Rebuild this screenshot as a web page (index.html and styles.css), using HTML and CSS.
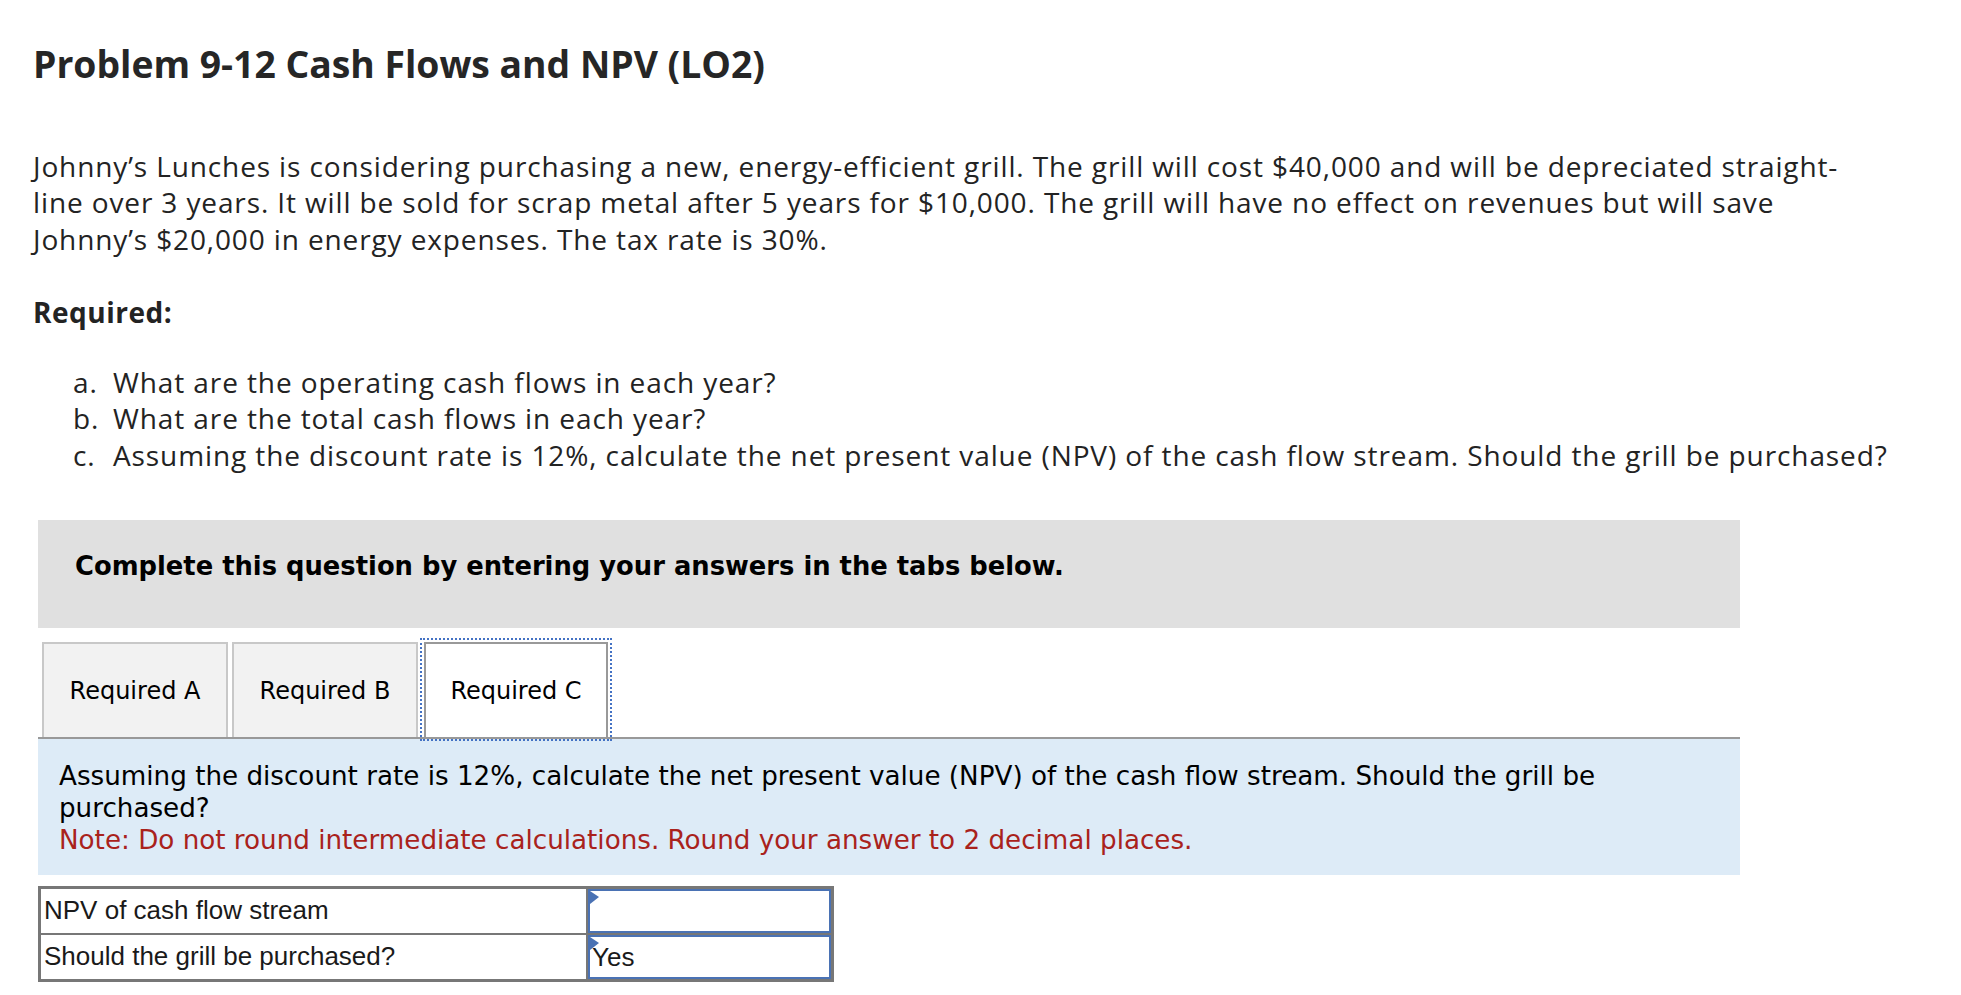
FILE: index.html
```html
<!DOCTYPE html>
<html lang="en">
<head>
<meta charset="utf-8">
<title>Problem 9-12 Cash Flows and NPV (LO2)</title>
<link rel="stylesheet" href="styles.css">
</head>
<body>
<div class="page">
  <h1 class="title">Problem 9-12 Cash Flows and NPV (LO2)</h1>
  <p class="intro">Johnny’s Lunches is considering purchasing a new, energy-efficient grill. The grill will cost $40,000 and will be depreciated straight-<br>line over 3 years. It will be sold for scrap metal after 5 years for $10,000. The grill will have no effect on revenues but will save<br>Johnny’s $20,000 in energy expenses. The tax rate is 30%.</p>
  <p class="req-head">Required:</p>
  <ol class="req-list">
    <li><span class="mk">a.</span><span>What are the operating cash flows in each year?</span></li>
    <li><span class="mk">b.</span><span>What are the total cash flows in each year?</span></li>
    <li><span class="mk">c.</span><span>Assuming the discount rate is 12%, calculate the net present value (NPV) of the cash flow stream. Should the grill be purchased?</span></li>
  </ol>

  <div class="work">
    <div class="instr">Complete this question by entering your answers in the tabs below.</div>
    <div class="tabs">
      <div class="tab">Required A</div>
      <div class="tab">Required B</div>
      <div class="tab active">Required C</div>
    </div>
    <div class="prompt">
      <p class="prompt-text">Assuming the discount rate is 12%, calculate the net present value (NPV) of the cash flow stream. Should the grill be<br>purchased?</p>
      <p class="note">Note: Do not round intermediate calculations. Round your answer to 2 decimal places.</p>
    </div>
    <table class="answer">
      <tr>
        <td class="label">NPV of cash flow stream</td>
        <td class="cell"><div class="input"><span class="flag"></span></div></td>
      </tr>
      <tr>
        <td class="label">Should the grill be purchased?</td>
        <td class="cell"><div class="input"><span class="flag"></span>Yes</div></td>
      </tr>
    </table>
  </div>
</div>
</body>
</html>
```

FILE: styles.css
```css
html, body {
  margin: 0;
  padding: 0;
  background: #ffffff;
}

.page {
  padding-left: 33px;
  font-family: "Open Sans", Lato, sans-serif;
  color: #232323;
}

.title {
  margin: 42px 0 0;
  font-size: 37.3px;
  line-height: 44px;
  font-weight: 700;
  color: #262626;
}

.intro {
  margin: 62px 0 0;
  font-size: 28px;
  letter-spacing: 0.88px;
  line-height: 36.3px;
  white-space: nowrap;
}

.req-head {
  margin: 37px 0 0;
  font-size: 28px;
  letter-spacing: 0.5px;
  line-height: 36.3px;
  font-weight: 700;
}

.req-list {
  margin: 34px 0 0;
  padding: 0 0 0 40px;
  list-style: none;
  font-size: 28px;
  letter-spacing: 0.9px;
  line-height: 36.3px;
}

.req-list li {
  display: flex;
  white-space: nowrap;
}

.req-list .mk {
  width: 40px;
  flex: none;
}

.work {
  margin: 47px 0 0 5px;
  width: 1702px;
  font-family: "DejaVu Sans", Verdana, sans-serif;
  color: #000;
}

.instr {
  background: #e0e0e0;
  height: 108px;
  box-sizing: border-box;
  padding: 31px 0 0 37px;
  font-size: 25.8px;
  line-height: 30px;
  font-weight: 700;
}

.tabs {
  margin-top: 14px;
  display: flex;
  align-items: flex-end;
  padding-left: 4px;
  border-bottom: 2px solid #999999;
}

.tab {
  box-sizing: border-box;
  width: 186px;
  height: 95px;
  margin-right: 4px;
  display: flex;
  align-items: center;
  justify-content: center;
  background: #f2f2f2;
  border: 2px solid #c8c8c8;
  border-bottom: none;
  font-size: 24px;
}

.tab.active {
  width: 184px;
  margin-left: 2px;
  background: #ffffff;
  border-color: #999999;
  outline: 2px dotted #4472c4;
  outline-offset: 2px;
  position: relative;
  z-index: 1;
}

.prompt {
  background: #ddebf7;
  padding: 21px 0 18.5px 21px;
  font-size: 26.2px;
  line-height: 32px;
}

.prompt p {
  margin: 0;
}

.note {
  color: #a9221c;
}

.answer {
  margin-top: 11px;
  border-collapse: collapse;
  border: 3px solid #777777;
  font-family: "Liberation Sans", Arial, sans-serif;
  font-size: 26px;
  color: #1a1a1a;
}

.answer td {
  border: 2px solid #777777;
  padding: 0;
  height: 44px;
}

.answer .label {
  width: 542px;
  padding-left: 3px;
}

.answer .cell {
  width: 243px;
}

.input {
  position: relative;
  box-sizing: border-box;
  height: 44px;
  border: 2px solid #4a72b4;
  padding-left: 2px;
  line-height: 40px;
  background: #fff;
}

.flag {
  position: absolute;
  left: 0;
  top: 0;
  width: 0;
  height: 0;
  border-left: 9px solid #4a72b4;
  border-top: 6px solid transparent;
  border-bottom: 7px solid transparent;
}
```
